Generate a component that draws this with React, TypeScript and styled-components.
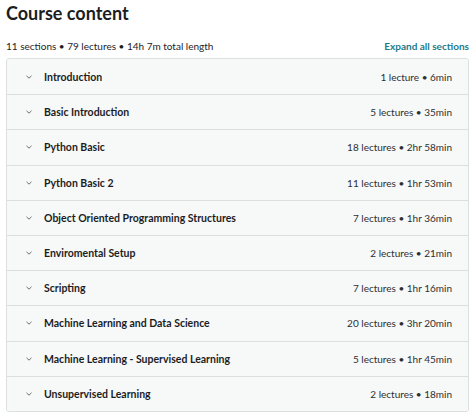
import styled, { createGlobalStyle } from 'styled-components';

const sections = [
	{ title: 'Introduction', meta: '1 lecture • 6min' },
	{ title: 'Basic Introduction', meta: '5 lectures • 35min' },
	{ title: 'Python Basic', meta: '18 lectures • 2hr 58min' },
	{ title: 'Python Basic 2', meta: '11 lectures • 1hr 53min' },
	{ title: 'Object Oriented Programming Structures', meta: '7 lectures • 1hr 36min' },
	{ title: 'Enviromental Setup', meta: '2 lectures • 21min' },
	{ title: 'Scripting', meta: '7 lectures • 1hr 16min' },
	{ title: 'Machine Learning and Data Science', meta: '20 lectures • 3hr 20min' },
	{ title: 'Machine Learning - Supervised Learning', meta: '5 lectures • 1hr 45min' },
	{ title: 'Unsupervised Learning', meta: '2 lectures • 18min' },
];

const Chevron = () => (
	<svg width="8" height="8" viewBox="0 0 8 8">
		<path d="M1.5 2.8 L4 5.2 L6.5 2.8" fill="none" stroke="#6a6f73" strokeWidth="1" />
	</svg>
);

export default function App() {
	return (
		<>
			<GlobalStyle/>
			<Container>
				<Title>Course content</Title>
				<Summary>
					<span>11 sections • 79 lectures • 14h 7m total length</span>
					<Expand>Expand all sections</Expand>
				</Summary>
				<List>
					{sections.map((s) => (
						<Row key={s.title}>
							<Left>
								<Chevron/>
								<SectionTitle>{s.title}</SectionTitle>
							</Left>
							<Meta>{s.meta}</Meta>
						</Row>
					))}
				</List>
			</Container>
		</>
	);
}

const GlobalStyle = createGlobalStyle`
	body {
		margin: 0;
		background: #fff;
		font-family: Lato, "Open Sans", sans-serif;
		color: #1c1d1f;
	}
`;

const Container = styled.div`
	width: 474px;
	padding: 0 5px 0 6px;
	box-sizing: border-box;
`;

const Title = styled.h2`
	margin: 0;
	padding-top: 3px;
	height: 31px;
	font-size: 18px;
	font-weight: 700;
	line-height: 20px;
`;

const Summary = styled.div`
	display: flex;
	justify-content: space-between;
	align-items: center;
	height: 24px;
	font-size: 10px;
	color: #1c1d1f;
`;

const Expand = styled.span`
	color: #1d7a8c;
	font-weight: 700;
`;

const List = styled.div`
	border: 1px solid #dcdfe0;
	border-radius: 3px;
	overflow: hidden;
`;

const Row = styled.div`
	display: flex;
	justify-content: space-between;
	align-items: center;
	height: 35.2px;
	box-sizing: border-box;
	padding: 0 16px 0 18px;
	background: #f7f8f8;
	& + & {
		border-top: 1px solid #dcdfe0;
	}
`;

const Left = styled.div`
	display: flex;
	align-items: center;
	gap: 11px;
`;

const SectionTitle = styled.span`
	font-size: 10.5px;
	font-weight: 700;
`;

const Meta = styled.span`
	font-size: 10px;
	color: #2d2f31;
`;
